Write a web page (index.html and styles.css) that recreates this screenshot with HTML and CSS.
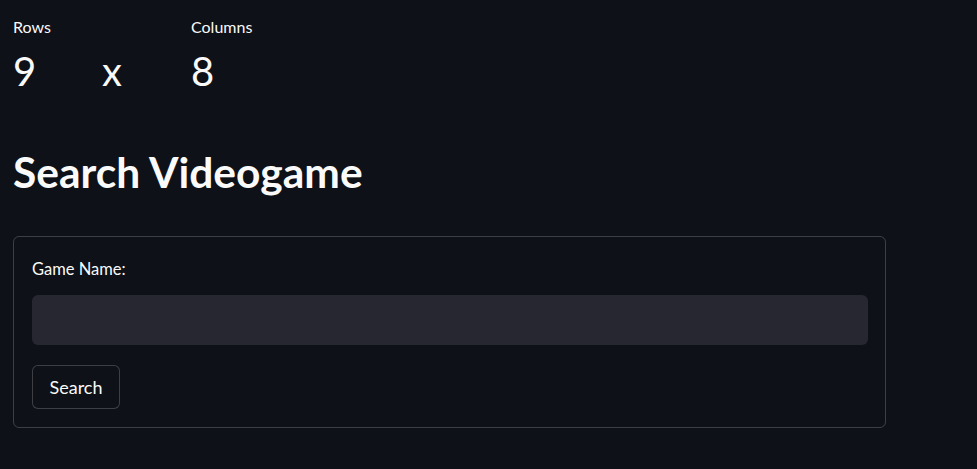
FILE: index.html
```html
<!DOCTYPE html>
<html lang="en">
<head>
    <meta charset="UTF-8">
    <title>Search Videogame</title>
    <link rel="stylesheet" href="styles.css">
</head>
<body>
<div class="main">
    <div class="metrics">
        <div class="metric">
            <div class="metric-label">Rows</div>
            <div class="metric-value">9</div>
        </div>
        <div class="metric">
            <div class="metric-label">&nbsp;</div>
            <div class="metric-value">x</div>
        </div>
        <div class="metric">
            <div class="metric-label">Columns</div>
            <div class="metric-value">8</div>
        </div>
    </div>

    <h1 class="title">Search Videogame</h1>

    <form class="form" onsubmit="return false">
        <label class="label" for="game">Game Name:</label>
        <input class="text-input" id="game" type="text">
        <button class="btn" type="submit">Search</button>
    </form>
</div>
</body>
</html>
```

FILE: styles.css
```css
* {
    margin: 0;
    padding: 0;
    box-sizing: border-box;
}
body {
    background: #0e1117;
    color: #fafafa;
    font-family: Lato, "Open Sans", sans-serif;
}
.main {
    width: 873px;
    margin-left: 13px;
    padding-top: 15px;
}
.metrics {
    display: grid;
    grid-template-columns: 89px 89px 89px;
}
.metric-label {
    font-size: 16px;
    line-height: 24px;
}
.metric-value {
    font-size: 40px;
    line-height: 64px;
}
.title {
    font-size: 42.5px;
    font-weight: 700;
    line-height: 56px;
    margin-top: 41px;
    margin-bottom: 36px;
}
.form {
    display: flex;
    flex-direction: column;
    align-items: flex-start;
    border: 1px solid rgba(250, 250, 250, 0.2);
    border-radius: 6px;
    padding: 20px 17px 18px 18px;
}
.label {
    font-size: 16.5px;
    line-height: 24px;
    margin-bottom: 14px;
}
.text-input {
    width: 100%;
    height: 50px;
    background: #262730;
    border: none;
    border-radius: 6px;
    color: #fafafa;
    font: inherit;
    padding: 0 14px;
    outline: none;
}
.btn {
    margin-top: 20px;
    width: 88px;
    height: 44px;
    background: #0e1117;
    color: #fafafa;
    border: 1px solid rgba(250, 250, 250, 0.2);
    border-radius: 6px;
    font-family: inherit;
    font-size: 18px;
    cursor: pointer;
}
```
